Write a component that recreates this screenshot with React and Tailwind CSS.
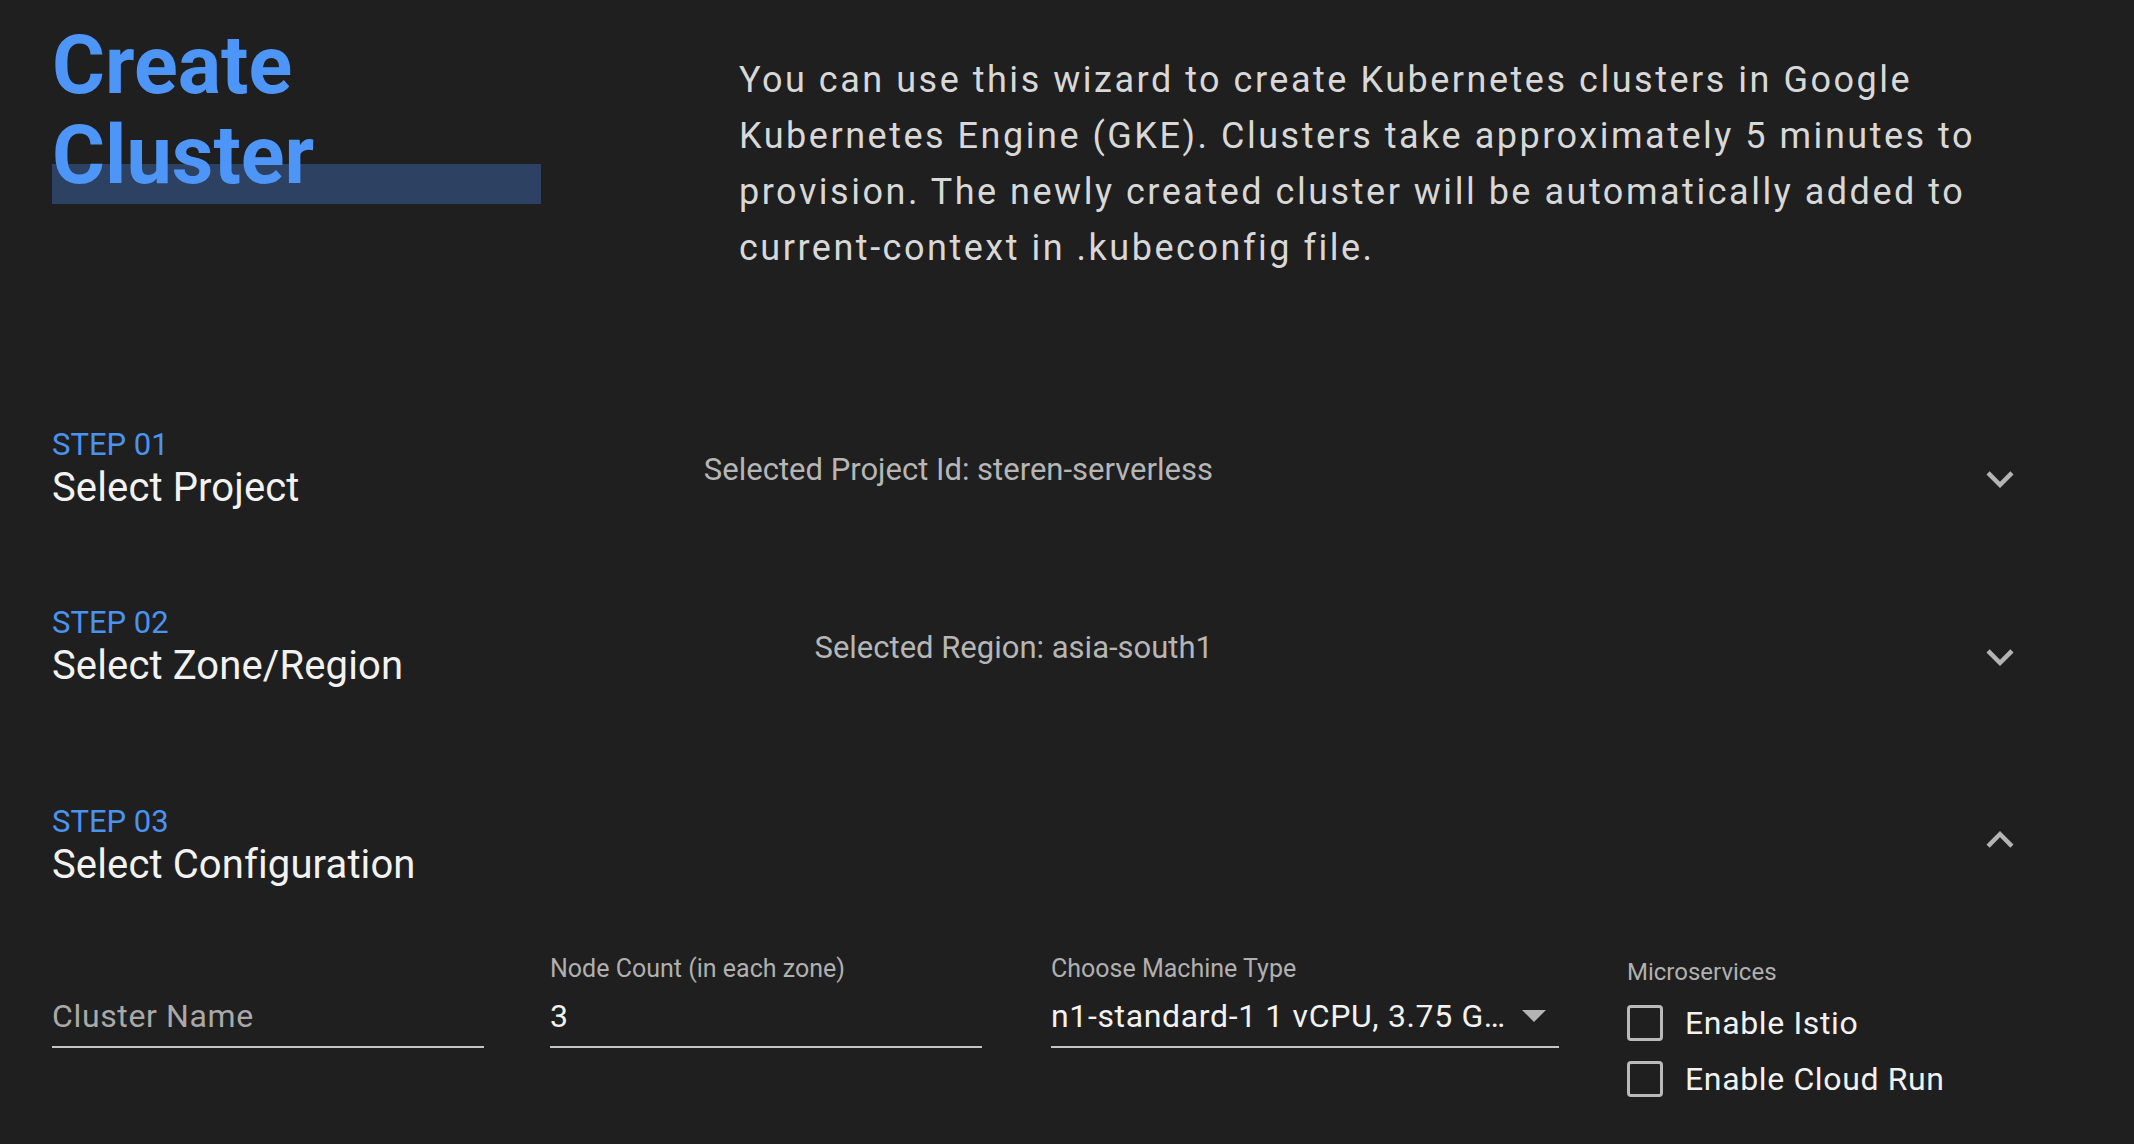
import React from "react";

const Chevron = ({ up, className }) => (
  <svg
    width="54"
    height="54"
    viewBox="0 0 24 24"
    fill="#b4b4b4"
    className={className}
  >
    <path
      d={
        up
          ? "M12 8l-6 6 1.41 1.41L12 10.83l4.59 4.58L18 14z"
          : "M16.59 8.59L12 13.17 7.41 8.59 6 10l6 6 6-6z"
      }
    />
  </svg>
);

const StepRow = ({ num, title, selected, up, className, chevronClass }) => (
  <div className={"flex items-center pr-[55px] " + className}>
    <div className="w-[560px]">
      <div className="text-[31px] leading-[38.4px] text-[#4a93f0]">STEP {num}</div>
      <div className="text-[40px] leading-[1.2] tracking-[0.003em] text-[#f2f2f2]">{title}</div>
    </div>
    <div className="w-[601px] text-right text-[31px] leading-[1.2] text-[#b6b6b6]">
      {selected}
    </div>
    <div className="ml-auto">
      <Chevron up={up} className={chevronClass} />
    </div>
  </div>
);

const Field = ({ label, width, className, children }) => (
  <div className={"flex flex-col " + width + " " + className}>
    <div className="h-[28.8px] text-[25px] leading-[28.8px] text-[#b0b0b0]">{label}</div>
    <div className="mt-[13px] flex items-center border-b-2 border-[#c4c4c4] pb-[11px] text-[32px] leading-[1.2] tracking-[0.02em]">
      {children}
    </div>
  </div>
);

const Checkbox = ({ label }) => (
  <label className="flex h-[56px] items-center">
    <span className="h-[36px] w-[36px] rounded-[4px] border-[3px] border-[#bababa]" />
    <span className="ml-[22px] text-[32px] leading-[1.2] tracking-[0.02em] text-[#f2f2f2]">
      {label}
    </span>
  </label>
);

export default function App() {
  return (
    <div className="min-h-screen bg-[#1f1f1f] px-[52px] font-['Roboto',sans-serif]">
      {/* Header */}
      <div className="flex items-start pt-[21px]">
        <h1 className="relative w-[489px] text-[81px] font-bold leading-[90px] text-[#4d96f8]">
          <span className="absolute left-0 top-[143px] h-[40px] w-full bg-[#2d4262]" />
          <span className="relative">Create Cluster</span>
        </h1>
        <p className="ml-[198px] mt-[31px] w-[1270px] text-[36px] leading-[56px] tracking-[0.07em] text-[#d8d8d8]">
          You can use this wizard to create Kubernetes clusters in Google
          Kubernetes Engine (GKE). Clusters take approximately 5 minutes to
          provision. The newly created cluster will be automatically added to
          current-context in .kubeconfig file.
        </p>
      </div>

      {/* Steps */}
      <StepRow
        num="01"
        title="Select Project"
        selected="Selected Project Id: steren-serverless"
        className="mt-[150px]"
        chevronClass="mt-[20px]"
      />
      <StepRow
        num="02"
        title="Select Zone/Region"
        selected="Selected Region: asia-south1"
        className="mt-[91.6px]"
        chevronClass="mt-[20px]"
      />
      <StepRow
        num="03"
        title="Select Configuration"
        up
        className="mt-[112.6px]"
        chevronClass="mb-[13px]"
      />

      {/* Configuration form */}
      <div className="mt-[65.5px] flex items-start">
        <Field label="" width="w-[432px]">
          <span className="text-[#a9a9a9]">Cluster Name</span>
        </Field>
        <Field label="Node Count (in each zone)" width="w-[432px]" className="ml-[66px]">
          <span className="text-[#f2f2f2]">3</span>
        </Field>
        <Field label="Choose Machine Type" width="w-[508px]" className="ml-[69px]">
          <span className="flex-1 whitespace-nowrap text-[#f2f2f2]">
            n1-standard-1 1 vCPU, 3.75 G…
          </span>
          <svg width="24" height="12" viewBox="0 0 24 12" className="mr-[13px]">
            <polygon points="0,0 24,0 12,12" fill="#b4b4b4" />
          </svg>
        </Field>
        <div className="ml-[68px] flex flex-col">
          <div className="mt-[3px] text-[24px] leading-[1.2] text-[#b0b0b0]">Microservices</div>
          <div className="mt-[8px]">
            <Checkbox label="Enable Istio" />
            <Checkbox label="Enable Cloud Run" />
          </div>
        </div>
      </div>
    </div>
  );
}
